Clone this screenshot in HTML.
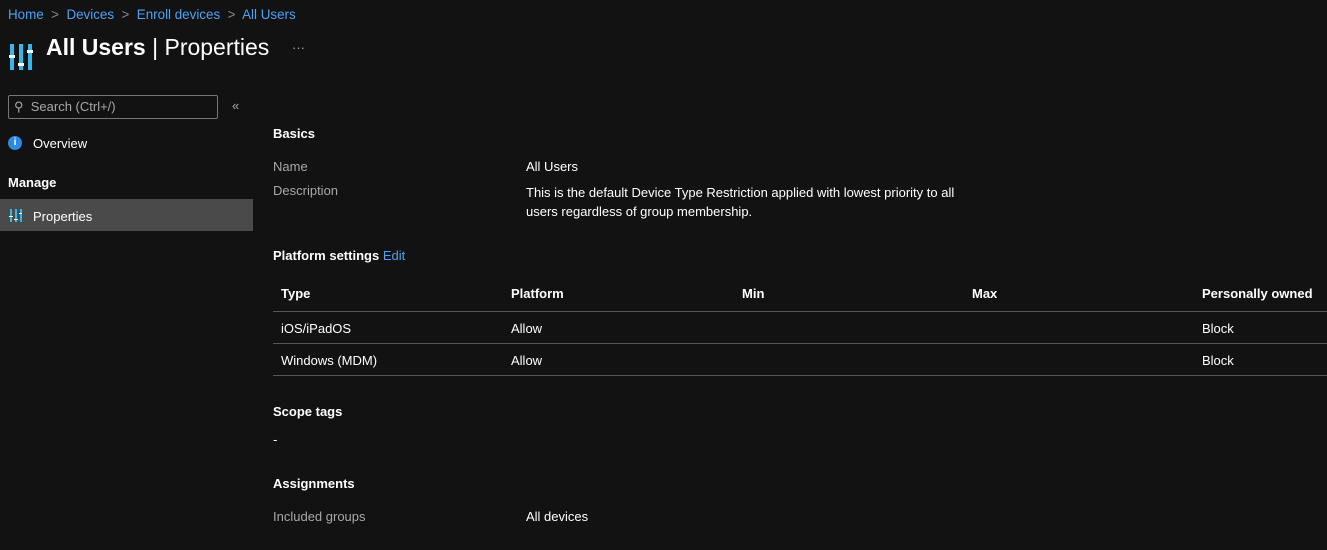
<!DOCTYPE html>
<html><head><style>
body{margin:0;width:1327px;height:550px;background:#121212;color:#fff;font-family:"Liberation Sans",sans-serif;font-size:13px;position:relative;overflow:hidden}
.a{position:absolute;white-space:nowrap}
.l{color:#4ea1f3}
.g{color:#a8a8a8}
.b{font-weight:bold}
.hr{position:absolute;left:273px;width:1054px;height:1px;background:#555}
</style></head><body>
<div class="a l" style="left:8px;top:7px;font-size:13.4px">Home <span style="color:#888">&nbsp;&gt;&nbsp;</span> Devices <span style="color:#888">&nbsp;&gt;&nbsp;</span> Enroll devices <span style="color:#888">&nbsp;&gt;&nbsp;</span> All Users</div>
<svg class="a" style="left:9px;top:41px" width="26" height="30" viewBox="0 0 26 30">
<g fill="#35b8e8"><rect x="1" y="3" width="4" height="26"/><rect x="10" y="3" width="4" height="26"/><rect x="19" y="3" width="4" height="26"/></g>
<g fill="#fff"><rect x="0" y="14" width="6" height="3"/><rect x="9" y="22" width="6" height="3"/><rect x="18" y="9" width="6" height="3"/></g></svg>
<div class="a" style="left:46px;top:34px;font-size:23px"><b>All Users</b> | Properties</div>
<div class="a g" style="left:292px;top:40px">···</div>
<div class="a" style="left:8px;top:95px;width:208px;height:22px;border:1px solid #777;border-radius:2px"></div>
<div class="a g" style="left:14px;top:99px">⚲ &nbsp;Search (Ctrl+/)</div>
<div class="a g" style="left:232px;top:98px">«</div>
<div class="a" style="left:8px;top:136px;width:14px;height:14px;border-radius:50%;background:#2b8be0;color:#fff;font-size:10px;text-align:center;line-height:14px;font-weight:bold">i</div>
<div class="a" style="left:33px;top:136px">Overview</div>
<div class="a b" style="left:8px;top:175px">Manage</div>
<div class="a" style="left:0;top:199px;width:253px;height:32px;background:#4a4a4a"></div>
<svg class="a" style="left:9px;top:209px" width="13" height="13"><g fill="#35b8e8"><rect x="1" y="0" width="2" height="13"/><rect x="6" y="0" width="2" height="13"/><rect x="11" y="0" width="2" height="13"/></g><g fill="#fff"><rect x="0" y="7" width="4" height="1"/><rect x="5" y="10" width="4" height="1"/><rect x="10" y="4" width="4" height="1"/></g></svg>
<div class="a" style="left:33px;top:209px">Properties</div>
<div class="a b" style="left:273px;top:126px">Basics</div>
<div class="a g" style="left:273px;top:159px">Name</div>
<div class="a" style="left:526px;top:159px">All Users</div>
<div class="a g" style="left:273px;top:183px">Description</div>
<div class="a" style="left:526px;top:183px;line-height:19px">This is the default Device Type Restriction applied with lowest priority to all<br>users regardless of group membership.</div>
<div class="a" style="left:273px;top:248px"><b>Platform settings</b> <span class="l">Edit</span></div>
<div class="a b" style="left:281px;top:286px">Type</div>
<div class="a b" style="left:511px;top:286px">Platform</div>
<div class="a b" style="left:742px;top:286px">Min</div>
<div class="a b" style="left:972px;top:286px">Max</div>
<div class="a b" style="left:1202px;top:286px">Personally owned</div>
<div class="hr" style="top:311px"></div>
<div class="a" style="left:281px;top:321px">iOS/iPadOS</div><div class="a" style="left:511px;top:321px">Allow</div><div class="a" style="left:1202px;top:321px">Block</div>
<div class="hr" style="top:343px"></div>
<div class="a" style="left:281px;top:353px">Windows (MDM)</div><div class="a" style="left:511px;top:353px">Allow</div><div class="a" style="left:1202px;top:353px">Block</div>
<div class="hr" style="top:375px"></div>
<div class="a b" style="left:273px;top:404px">Scope tags</div>
<div class="a" style="left:273px;top:432px">-</div>
<div class="a b" style="left:273px;top:476px">Assignments</div>
<div class="a g" style="left:273px;top:509px">Included groups</div>
<div class="a" style="left:526px;top:509px">All devices</div>
</body></html>
